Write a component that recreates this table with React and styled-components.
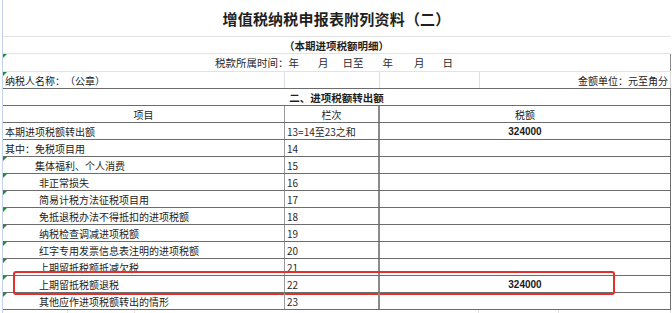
import React from "react";
import styled, { createGlobalStyle, css } from "styled-components";

const Global = createGlobalStyle`
  html, body { margin: 0; padding: 0; background: #ffffff; }
  body {
    overflow: hidden;
    font-family: "Noto Sans CJK SC", "Noto Sans", sans-serif;
    color: #1c1c1c;
    text-spacing-trim: space-all;
  }
`;

const CJK = `"Noto Sans CJK SC", "Noto Sans", sans-serif`;

const Sheet = styled.div`
  position: relative;
  margin-left: 2px;
  width: 668px;
  border-left: 1px solid #c3d4ea;
  font-family: ${CJK};
  font-size: 10px;
  text-spacing-trim: space-all;
`;

const Bar = styled.div`
  box-sizing: border-box;
  height: ${(p) => p.$h}px;
  display: flex;
  align-items: center;
  justify-content: ${(p) => (p.$center ? "center" : "flex-start")};
  border-bottom: 1px solid ${(p) => (p.$dark ? "#6f6f6f" : "#e3e3e3")};
  border-right: 1px solid ${(p) => (p.$dark ? "#6f6f6f" : "transparent")};
`;

const Title = styled.h1`
  margin: 0;
  font-size: 15px;
  font-weight: 700;
  letter-spacing: 0.2px;
  color: #1f1f1f;
`;

const SubTitle = styled.div`
  font-size: 10.5px;
  font-weight: 700;
  color: #1f1f1f;
`;

const Period = styled.div`
  display: flex;
  margin-left: 212px;
  font-size: 10.5px;
  color: #2a2a2a;
`;

const PeriodPart = styled.span`
  margin-left: ${(p) => p.$gap || 0}px;
`;

const Grid = styled.div`
  box-sizing: border-box;
  display: grid;
  grid-template-columns: ${(p) => p.$cols};
  height: ${(p) => p.$h || 17}px;
  border-bottom: 1px solid ${(p) => (p.$light ? "#e3e3e3" : "#6c6c6c")};
  position: relative;
`;

const Cell = styled.div`
  box-sizing: border-box;
  position: relative;
  display: flex;
  align-items: center;
  min-width: 0;
  white-space: nowrap;
  padding-left: ${(p) => p.$indent ?? 2}px;
  justify-content: ${(p) => (p.$center ? "center" : p.$right ? "flex-end" : "flex-start")};
  padding-right: ${(p) => (p.$right ? 2 : 0)}px;
  border-right: ${(p) => p.$rw || 1}px solid ${(p) => p.$line || "#8a8a8a"};
  ${(p) =>
    p.$mark &&
    css`
      &::before {
        content: "";
        position: absolute;
        left: 0;
        top: 0;
        border-style: solid;
        border-width: 4px 4px 0 0;
        border-color: #1f8f2e transparent transparent transparent;
      }
    `}
`;

const Amount = styled.span`
  font-family: "Liberation Sans", Arial, sans-serif;
  font-weight: 700;
  font-size: 10px;
  color: #1a1a1a;
`;

const Code = styled.span`
  font-size: 10px;
  color: #2a2a2a;
`;

const Highlight = styled.div`
  position: absolute;
  left: 10px;
  top: -5px;
  width: 602px;
  height: 24px;
  box-sizing: border-box;
  border: 2px solid #e4302c;
  border-radius: 3px;
  pointer-events: none;
`;

const Filler = styled.div`
  display: grid;
  grid-template-columns: 65px 67px 344px 80px 112px;
  height: 4px;
`;

const FillerCell = styled.div`
  border-right: 1px solid #e2e2e2;
`;

const MAIN_COLS = "282px 95px 291px";

const rows = [
  { item: "本期进项税额转出额", indent: 2, code: "13=14至23之和", amount: "324000" },
  { item: "其中：免税项目用", indent: 2, code: "14" },
  { item: "集体福利、个人消费", indent: 32, code: "15", mark: true },
  { item: "非正常损失", indent: 36, code: "16", mark: true },
  { item: "简易计税方法征税项目用", indent: 36, code: "17", mark: true },
  { item: "免抵退税办法不得抵扣的进项税额", indent: 36, code: "18", mark: true },
  { item: "纳税检查调减进项税额", indent: 36, code: "19", mark: true },
  { item: "红字专用发票信息表注明的进项税额", indent: 36, code: "20", mark: true },
  { item: "上期留抵税额抵减欠税", indent: 36, code: "21", mark: true },
  { item: "上期留抵税额退税", indent: 36, code: "22", amount: "324000", mark: true, highlight: true },
  { item: "其他应作进项税额转出的情形", indent: 36, code: "23", mark: true },
];

export default function App() {
  return (
    <>
      <Global />
      <Sheet>
        <Bar $h={37} $center>
          <Title>增值税纳税申报表附列资料（二）</Title>
        </Bar>
        <Bar $h={17} $center>
          <SubTitle>（本期进项税额明细）</SubTitle>
        </Bar>
        <Grid $cols="668px" $h={18} $light>
          <Cell $indent={0} $rw={0} $mark>
            <Period>
              <PeriodPart>税款所属时间：</PeriodPart>
              <PeriodPart>年</PeriodPart>
              <PeriodPart $gap={19}>月</PeriodPart>
              <PeriodPart $gap={14}>日至</PeriodPart>
              <PeriodPart $gap={19}>年</PeriodPart>
              <PeriodPart $gap={21}>月</PeriodPart>
              <PeriodPart $gap={18}>日</PeriodPart>
            </Period>
          </Cell>
        </Grid>
        <Grid $cols="282px 95px 100px 191px" $h={17}>
          <Cell $line="#e0e0e0" $mark>纳税人名称：（公章）</Cell>
          <Cell $line="#e0e0e0" />
          <Cell $line="#e0e0e0" />
          <Cell $line="#d8d8d8" $right>金额单位：元至角分</Cell>
        </Grid>
        <Grid $cols="668px" $h={17}>
          <Cell $center $indent={0} $line="#6f6f6f">
            <SubTitle>二、进项税额转出额</SubTitle>
          </Cell>
        </Grid>
        <Grid $cols={MAIN_COLS} $h={17}>
          <Cell $center $indent={0} $line="#9a9a9a">项目</Cell>
          <Cell $center $indent={0} $rw={2} $line="#8a8a8a">栏次</Cell>
          <Cell $center $indent={0} $line="#6f6f6f">税额</Cell>
        </Grid>
        {rows.map((r) => (
          <Grid key={r.code} $cols={MAIN_COLS} $h={17}>
            <Cell $indent={r.indent} $mark={r.mark} $line="#9a9a9a">{r.item}</Cell>
            <Cell $rw={2} $line="#8a8a8a">
              <Code>{r.code}</Code>
            </Cell>
            <Cell $center $indent={0} $line="#6f6f6f">
              {r.amount && <Amount>{r.amount}</Amount>}
            </Cell>
            {r.highlight && <Highlight />}
          </Grid>
        ))}
        <Filler>
          <FillerCell />
          <FillerCell />
          <FillerCell />
          <FillerCell />
          <FillerCell />
        </Filler>
      </Sheet>
    </>
  );
}
